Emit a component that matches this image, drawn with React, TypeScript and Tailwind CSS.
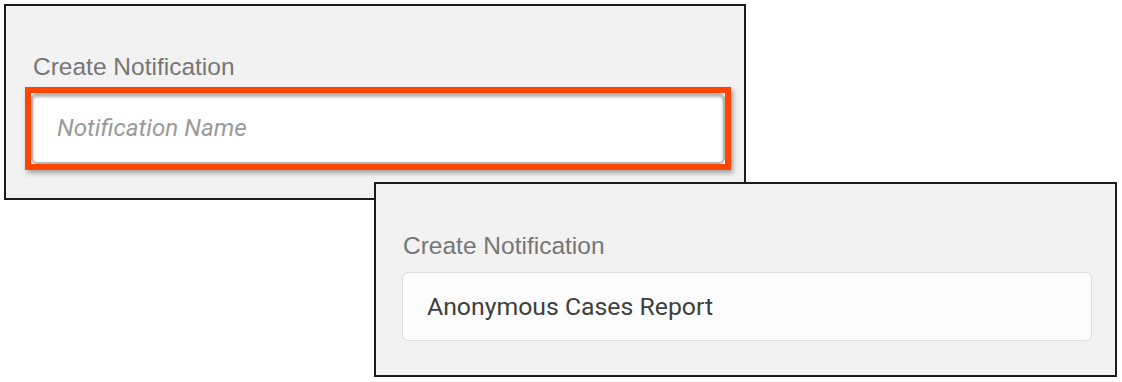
export default function App() {
  return (
    <div className="relative h-[382px] w-[1122px] overflow-hidden bg-white font-['Roboto','Liberation_Sans',sans-serif]">
      {/* first capture: empty field, highlighted */}
      <div className="absolute left-[4px] top-[4px] h-[196px] w-[742px] border-2 border-[#1c1c1c] bg-[#f2f2f2] pl-[19px] pr-[13px]">
        <div className="mt-[47px] pl-[8px] font-['Liberation_Sans',Arial,sans-serif] text-[24.5px] leading-[28px] text-[#767676]">
          Create Notification
        </div>
        <div className="mt-[6px] border-[6px] border-[#ff4500] shadow-[2px_3px_5px_rgba(0,0,0,0.35)]">
          <div className="flex h-[71px] items-center rounded-[6px] border-2 border-[#b5b5b5] bg-white pl-[24px] shadow-[inset_0_2px_3px_rgba(0,0,0,0.3)]">
            <span className="text-[24.2px] italic text-[#9a9a9a]">Notification Name</span>
          </div>
        </div>
      </div>

      {/* second capture: filled field */}
      <div className="absolute left-[374px] top-[182px] h-[195px] w-[743px] border-2 border-[#1c1c1c] bg-[#f2f2f2] pl-[26px] pr-[23px]">
        <div className="mt-[48px] pl-[1px] font-['Liberation_Sans',Arial,sans-serif] text-[24.5px] leading-[28px] text-[#767676]">
          Create Notification
        </div>
        <div className="mt-[12px] flex h-[69px] items-center rounded-[6px] border border-[#dcdcdc] bg-[#fcfcfc] pl-[24px]">
          <span className="text-[24.8px] text-[#3f3f3f]">Anonymous Cases Report</span>
        </div>
      </div>
    </div>
  )
}
